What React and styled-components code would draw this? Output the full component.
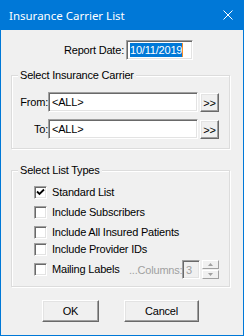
import React from "react";
import styled, { createGlobalStyle } from "styled-components";

const GlobalStyle = createGlobalStyle`
  html, body { margin: 0; padding: 0; background: #f0f0f0; }
  * { box-sizing: border-box; }
`;

const Window = styled.div`
  width: 244px;
  height: 336px;
  display: flex;
  flex-direction: column;
  background: #f0f0f0;
  font-family: "Liberation Sans", Arial, sans-serif;
  font-size: 11px;
  letter-spacing: -0.2px;
  color: #000;
`;

const TitleBar = styled.div`
  height: 30px;
  flex: none;
  background: #0078d7;
  display: flex;
  align-items: center;
  justify-content: space-between;
  padding: 0 11px 0 9px;
  color: #fff;
`;

const Title = styled.span`
  font-family: "Noto Sans", "Open Sans", sans-serif;
  font-size: 11.5px;
  letter-spacing: 0;
  margin-top: 1px;
`;

const CloseIcon = styled.svg`
  width: 10px;
  height: 10px;
  display: block;
`;

const Body = styled.div`
  flex: 1;
  border: 1px solid #0078d7;
  border-top: none;
  display: flex;
  flex-direction: column;
  padding-top: 10px;
`;

const DateRow = styled.div`
  display: flex;
  align-items: center;
  height: 20px;
`;

const Label = styled.span`
  width: ${(p) => p.$w}px;
  text-align: right;
  flex: none;
  white-space: nowrap;
  padding-right: 1px;
`;

const Sunken = styled.div`
  height: ${(p) => p.$h || 20}px;
  width: ${(p) => p.$w}px;
  flex: none;
  border: 1px solid;
  border-color: #a0a0a0 #ffffff #ffffff #a0a0a0;
  box-shadow: inset 1px 1px 0 #696969, inset -1px -1px 0 #e3e3e3;
  background: ${(p) => (p.$disabled ? "#f0f0f0" : "#fff")};
  color: ${(p) => (p.$disabled ? "#a0a0a0" : "#000")};
  display: flex;
  align-items: center;
  padding-left: 3px;
  margin-left: ${(p) => p.$ml || 0}px;
  white-space: nowrap;
  overflow: hidden;
`;

const Selected = styled.span`
  background: #0078d7;
  color: #fff;
  line-height: 14px;
  border-right: 1px solid #f28c28;
  padding-right: 0;
`;

const Group = styled.div`
  position: relative;
  margin: ${(p) => p.$mt}px 0 0 10px;
  width: 219px;
  height: ${(p) => p.$h}px;
  border: 1px solid #dcdcdc;
  box-shadow: inset 1px 1px 0 #fff, 1px 1px 0 #fff;
  padding-top: ${(p) => p.$pt}px;
  display: flex;
  flex-direction: column;
`;

const Legend = styled.span`
  position: absolute;
  top: -7px;
  left: 6px;
  padding: 0 2px;
  background: #f0f0f0;
  line-height: 13px;
`;

const FieldRow = styled.div`
  display: flex;
  align-items: flex-start;
  height: 20px;
  margin-top: ${(p) => p.$mt || 0}px;
`;

const FieldLabel = styled.span`
  width: 36px;
  text-align: right;
  line-height: 20px;
  flex: none;
`;

const Raised = styled.button`
  font: inherit;
  letter-spacing: inherit;
  color: #000;
  width: ${(p) => p.$w}px;
  height: ${(p) => p.$h}px;
  margin-left: ${(p) => p.$ml || 0}px;
  margin-top: ${(p) => p.$mtop || 0}px;
  flex: none;
  padding: 0;
  background: #f0f0f0;
  border: 1px solid;
  border-color: #ffffff #696969 #696969 #ffffff;
  box-shadow: inset -1px -1px 0 #a0a0a0, inset 1px 1px 0 #e3e3e3;
  display: flex;
  align-items: center;
  justify-content: center;
`;

const CheckRow = styled.div`
  display: flex;
  align-items: center;
  height: 13px;
  padding-left: 22px;
  margin-top: ${(p) => p.$mt}px;
`;

const Box = styled.span`
  width: 13px;
  height: 13px;
  flex: none;
  border: 1px solid;
  border-color: #a0a0a0 #ffffff #ffffff #a0a0a0;
  box-shadow: inset 1px 1px 0 #696969, inset -1px -1px 0 #e3e3e3;
  background: #fff;
  display: flex;
  align-items: center;
  justify-content: center;
  margin-right: 5px;
`;

const CheckText = styled.span`
  white-space: nowrap;
  line-height: 13px;
  width: ${(p) => (p.$w ? p.$w + "px" : "auto")};
  flex: none;
`;

const Disabled = styled.span`
  color: #a0a0a0;
  white-space: nowrap;
  width: 53px;
  flex: none;
`;

const Spin = styled.div`
  display: flex;
  flex-direction: column;
  margin-left: 2px;
  width: 17px;
  height: 19px;
  flex: none;
`;

const SpinHalf = styled.div`
  height: 9px;
  margin-top: ${(p) => p.$mt || 0}px;
  background: #f0f0f0;
  border: 1px solid;
  border-color: #ffffff #a0a0a0 #a0a0a0 #ffffff;
  display: flex;
  align-items: center;
  justify-content: center;
`;

const ButtonRow = styled.div`
  display: flex;
  margin-top: 13px;
  padding-left: 41px;
  gap: 25px;
`;

const Check = () => (
  <svg width="9" height="9" viewBox="0 0 9 9">
    <path d="M1 3.5 L3.5 6 L8 1.5" stroke="#000" strokeWidth="1.8" fill="none" />
  </svg>
);

const Arrow = ({ up }) => (
  <svg width="5" height="3" viewBox="0 0 5 3">
    <path d={up ? "M2.5 0 L5 3 L0 3 Z" : "M0 0 L5 0 L2.5 3 Z"} fill="#a0a0a0" />
  </svg>
);

const items = [
  { label: "Standard List", checked: true, mt: 15 },
  { label: "Include Subscribers", mt: 7 },
  { label: "Include All Insured Patients", mt: 7 },
  { label: "Include Provider IDs", mt: 4 },
];

export default function App() {
  return (
    <>
      <GlobalStyle />
      <Window>
        <TitleBar>
          <Title>Insurance Carrier List</Title>
          <CloseIcon viewBox="0 0 10 10">
            <path d="M0.5 0.5 L9.5 9.5 M9.5 0.5 L0.5 9.5" stroke="#fff" strokeWidth="1" />
          </CloseIcon>
        </TitleBar>
        <Body>
          <DateRow>
            <Label $w={124}>Report Date:</Label>
            <Sunken $w={67} $ml={1}>
              <Selected>10/11/2019</Selected>
            </Sunken>
          </DateRow>
          <Group $mt={15} $h={74} $pt={16}>
            <Legend>Select Insurance Carrier</Legend>
            <FieldRow>
              <FieldLabel>From:</FieldLabel>
              <Sunken $w={150}>&lt;ALL&gt;</Sunken>
              <Raised $w={19} $h={19} $ml={2} $mtop={1}>&gt;&gt;</Raised>
            </FieldRow>
            <FieldRow $mt={7}>
              <FieldLabel>To:</FieldLabel>
              <Sunken $w={150}>&lt;ALL&gt;</Sunken>
              <Raised $w={19} $h={19} $ml={2} $mtop={1}>&gt;&gt;</Raised>
            </FieldRow>
          </Group>
          <Group $mt={21} $h={117} $pt={0}>
            <Legend>Select List Types</Legend>
            {items.map((it) => (
              <CheckRow key={it.label} $mt={it.mt}>
                <Box>{it.checked && <Check />}</Box>
                <CheckText>{it.label}</CheckText>
              </CheckRow>
            ))}
            <CheckRow $mt={7}>
              <Box />
              <CheckText $w={77}>Mailing Labels</CheckText>
              <Disabled>...Columns:</Disabled>
              <Sunken $w={18} $h={19} $disabled>3</Sunken>
              <Spin>
                <SpinHalf><Arrow up /></SpinHalf>
                <SpinHalf $mt={1}><Arrow /></SpinHalf>
              </Spin>
            </CheckRow>
          </Group>
          <ButtonRow>
            <Raised $w={57} $h={22}>OK</Raised>
            <Raised $w={75} $h={22}>Cancel</Raised>
          </ButtonRow>
        </Body>
      </Window>
    </>
  );
}
